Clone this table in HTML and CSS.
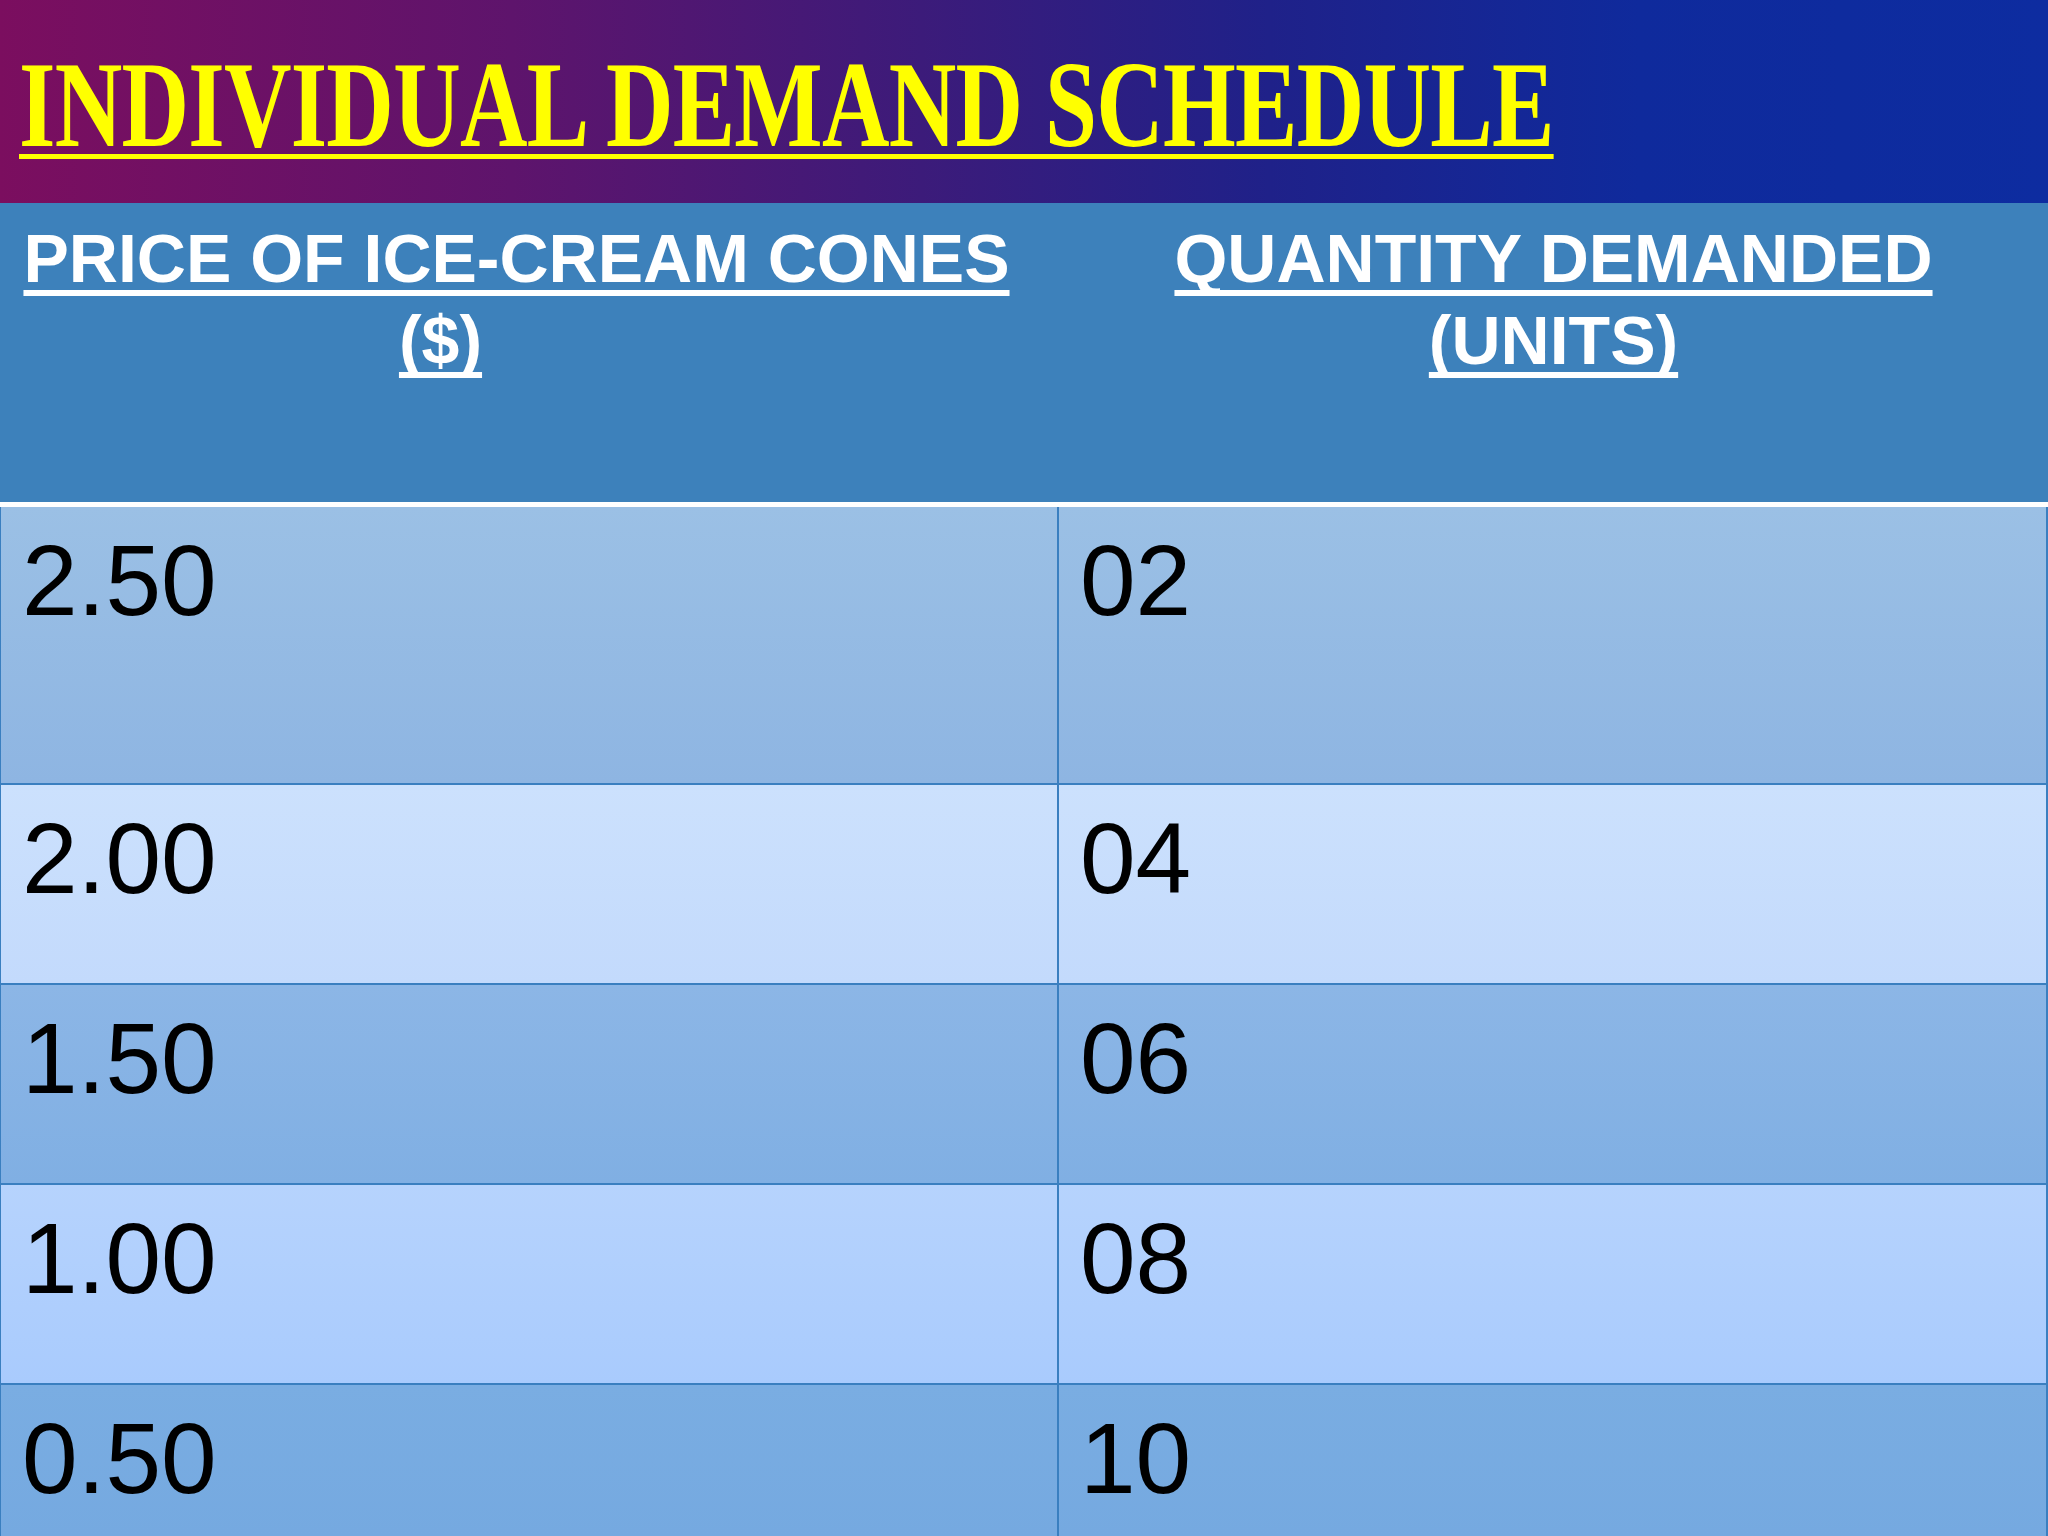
FILE: index.html
```html
<!DOCTYPE html>
<html lang="en">
<head>
<meta charset="utf-8">
<title>Individual Demand Schedule</title>
<link rel="stylesheet" href="styles.css">
</head>
<body>
<div class="slide">
  <header class="title-band">
    <h1 class="title"><span class="title-text">INDIVIDUAL DEMAND SCHEDULE</span></h1>
  </header>
  <div class="table">
    <div class="head head-price">
      <span class="hline hline-1">PRICE OF ICE-CREAM CONES</span>
      <span class="hline hline-2">($)</span>
    </div>
    <div class="head head-qty">
      <span class="hline">QUANTITY DEMANDED</span>
      <span class="hline">(UNITS)</span>
    </div>

    <div class="cell c1 r1">2.50</div><div class="cell c2 r1">02</div>
    <div class="cell c1 r2">2.00</div><div class="cell c2 r2">04</div>
    <div class="cell c1 r3">1.50</div><div class="cell c2 r3">06</div>
    <div class="cell c1 r4">1.00</div><div class="cell c2 r4">08</div>
    <div class="cell c1 r5">0.50</div><div class="cell c2 r5">10</div>
  </div>
</div>
</body>
</html>
```

FILE: styles.css
```css
html, body {
  margin: 0;
  padding: 0;
}
body {
  width: 2048px;
  height: 1536px;
  overflow: hidden;
  background: #76aae0;
}
.slide {
  width: 2048px;
  height: 1536px;
  display: flex;
  flex-direction: column;
}
.title-band {
  height: 203px;
  flex: none;
  background: linear-gradient(to right, #7b0e5f 0%, #5e146c 25%, #3c1b7a 45%, #1f2189 62%, #0f2a9c 80%, #0d2ca0 100%);
  overflow: hidden;
}
.title {
  margin: 0;
  padding: 35px 0 0 19px;
  font-family: "Liberation Serif", "DejaVu Serif", serif;
  font-weight: bold;
  font-size: 122px;
  line-height: 140px;
  color: #ffff00;
  white-space: nowrap;
}
.title-text {
  display: inline-block;
  transform: scaleX(0.767);
  transform-origin: left center;
  text-decoration: underline;
  text-decoration-thickness: 5px;
  text-underline-offset: 8px;
  text-decoration-skip-ink: none;
  letter-spacing: -1px;
}
.table {
  flex: 1;
  display: grid;
  grid-template-columns: 1059px 989px;
  grid-template-rows: 304px 278px 200px 200px 200px 1fr;
  font-family: "Liberation Sans", Arial, sans-serif;
}
.head {
  background: #3d81bb;
  border-bottom: 5px solid #ffffff;
  display: flex;
  flex-direction: column;
  align-items: center;
  padding-top: 14px;
  color: #ffffff;
  font-weight: bold;
  font-size: 68px;
  line-height: 82px;
}
.head-price {
  padding-right: 26px;
}
.hline {
  text-decoration: underline;
  text-decoration-thickness: 6px;
  text-underline-offset: 8px;
  text-decoration-skip-ink: none;
  white-space: nowrap;
}
.hline-2 {
  margin-right: 152px;
}
.cell {
  font-size: 100px;
  line-height: normal;
  color: #000000;
  padding: 16px 0 0 21px;
  border-bottom: 2px solid #3a7fc0;
}
.c1 {
  border-right: 2px solid #3a7fc0;
  border-left: 1px solid #3a7fc0;
  padding-left: 21px;
}
.c2 {
  border-right: 2px solid #3a7fc0;
}
.r1 { background: linear-gradient(to bottom, #9bc0e5, #8eb5e2); }
.r2 { background: linear-gradient(to bottom, #cce1fd, #c3dafc); }
.r3 { background: linear-gradient(to bottom, #8cb6e6, #80afe3); }
.r4 { background: linear-gradient(to bottom, #b6d3fd, #a9cbfd); }
.r5 { background: linear-gradient(to bottom, #7aade2, #75a9e0); border-bottom: none; }
```
